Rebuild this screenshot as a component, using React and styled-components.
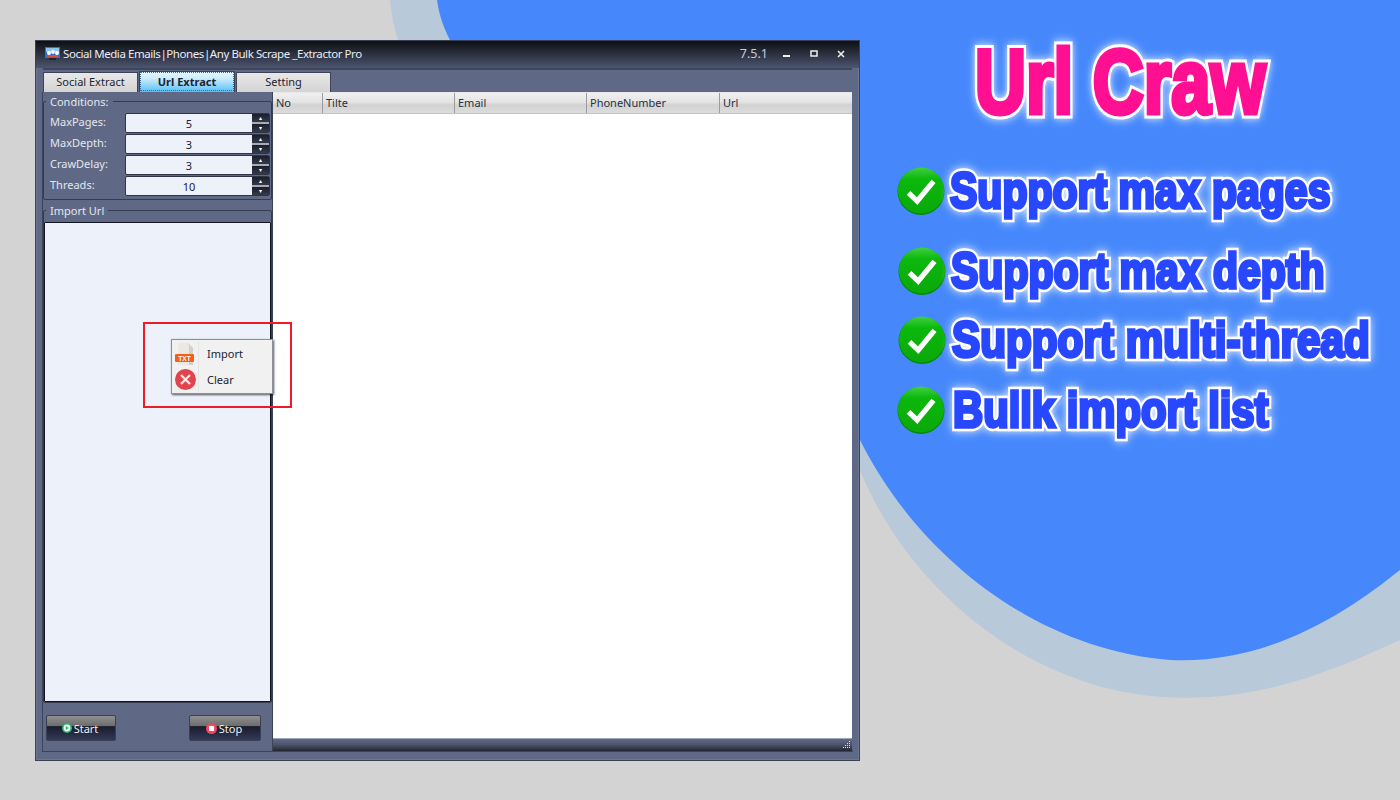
import React from 'react';
import styled, { createGlobalStyle } from 'styled-components';

const GlobalStyle = createGlobalStyle`
	html, body {
		margin: 0;
		padding: 0;
		background: #d3d3d3;
		overflow: hidden;
	}
	* {
		box-sizing: border-box;
	}
`;

const Page = styled.div`
	position: relative;
	width: 1400px;
	height: 800px;
	overflow: hidden;
	display: flex;
	align-items: flex-start;
	padding: 40px 0 0 35px;
	font-family: 'Noto Sans', 'Open Sans', sans-serif;
`;

const Backdrop = styled.svg`
	position: absolute;
	left: 0;
	top: 0;
`;

const AppWindow = styled.div`
	position: relative;
	width: 825px;
	height: 721px;
	flex: none;
	display: flex;
	flex-direction: column;
	background: #5f6986;
	border: 1px solid #3a4155;
	box-shadow: inset 0 0 0 1px #6d7792;
`;

const TitleBar = styled.div`
	height: 27px;
	flex: none;
	display: flex;
	align-items: center;
	padding: 0 5px 2px 9px;
	background: linear-gradient(#0d0f14 0%, #20242e 30%, #4c5570 100%);
	color: #e8ebf2;
	font-size: 11.5px;
	letter-spacing: -0.43px;
`;

const AppTitle = styled.span`
	margin-left: 3px;
	flex: 1;
	white-space: nowrap;
`;

const Version = styled.span`
	font-size: 12.5px;
	color: #c5cad6;
	margin-right: 5px;
	letter-spacing: 0;
`;

const WinButton = styled.span`
	width: 27px;
	display: flex;
	justify-content: center;
	align-items: center;
	color: #fff;
`;

const TabStrip = styled.div`
	flex: none;
	height: 24px;
	margin: 0 7px;
	padding-top: 2px;
	border-top: 2px solid #3f465c;
	display: flex;
	align-items: flex-end;
`;

const Tab = styled.div`
	width: ${p => p.$w}px;
	height: ${p => (p.$active ? 21 : 20)}px;
	padding-bottom: 2px;
	display: flex;
	align-items: center;
	justify-content: center;
	font-size: 11px;
	border: 1px solid #3c4357;
	border-bottom: none;
	margin-right: ${p => (p.$active ? 1 : 0)}px;
	margin-left: ${p => (p.$active ? 1 : 0)}px;
	color: #1d2330;
	font-weight: ${p => (p.$active ? 700 : 400)};
	background: ${p =>
		p.$active
			? 'linear-gradient(#e3f6fe 0%, #cfeefc 30%, #58c0f8 100%)'
			: 'linear-gradient(#e8e8e8, #d4d4d4)'};
	outline: ${p => (p.$active ? '1px dotted #3a6a96' : 'none')};
	outline-offset: -2px;
`;

const Body = styled.div`
	flex: 1;
	min-height: 0;
	display: flex;
	margin: 0 6px 8px 6px;
	border-bottom: 1px solid #3c4357;
`;

const Sidebar = styled.div`
	width: 231px;
	flex: none;
	display: flex;
	flex-direction: column;
	border-left: 1px solid #3c4357;
	border-right: 1px solid #3c4357;
`;

const Group = styled.fieldset`
	margin: 2px 0 0;
	padding: 0;
	min-width: 0;
	border: 1px solid #353c50;
	border-radius: 2px;
	${p => (p.$grow ? 'flex: 1; min-height: 0; display: flex; flex-direction: column;' : '')}
`;

const GroupLabel = styled.legend`
	margin-left: 2px;
	padding: 0 4px;
	font-size: 11px;
	line-height: 15px;
	color: #e3e6ee;
`;

const Fields = styled.div`
	display: flex;
	flex-direction: column;
	gap: 1px;
	padding: 4px 1px 3px 0;
`;

const FieldRow = styled.div`
	height: 20px;
	display: flex;
	align-items: center;
`;

const FieldName = styled.span`
	width: 81px;
	padding: 0 0 3px 6px;
	font-size: 11px;
	color: #e3e6ee;
`;

const NumberBox = styled.div`
	flex: 1;
	height: 20px;
	display: flex;
	align-items: stretch;
	background: #edf2fa;
	border: 1px solid #2f3546;
	border-radius: 2px;
`;

const NumberValue = styled.span`
	flex: 1;
	text-align: center;
	font-size: 11px;
	line-height: 20px;
	color: #1b2130;
`;

const Spinner = styled.div`
	width: 17px;
	display: flex;
	flex-direction: column;
	gap: 2px;
	background: #a6abb5;
`;

const SpinPart = styled.span`
	flex: 1;
	background: linear-gradient(#1a1e2c, #343a4a);
	color: #fff;
	font-size: 6px;
	line-height: 8px;
	text-align: center;
`;

const ImportGroup = styled.div`
	flex: 1;
	min-height: 0;
	display: flex;
	flex-direction: column;
	margin-top: 1px;
`;

const UrlArea = styled.div`
	flex: 1;
	min-height: 0;
	margin: 4px 0 0 0;
	background: #edf2fa;
	border: 1px solid #11141c;
	border-radius: 1px;
`;

const ButtonRow = styled.div`
	flex: none;
	height: 48px;
	display: flex;
	justify-content: space-between;
	align-items: flex-start;
	padding: 12px 11px 0 3px;
`;

const ActionButton = styled.div`
	width: ${p => p.$w}px;
	height: 26px;
	display: flex;
	align-items: center;
	justify-content: center;
	gap: 2px;
	padding-right: 2px;
	border: 1px solid #3a4054;
	border-radius: 2px;
	color: #eef0f5;
	font-size: 11px;
	background: linear-gradient(#8f8f8f 0%, #6c6c6c 42%, #191c2a 44%, #323a5a 100%);
`;

const Table = styled.div`
	flex: 1;
	min-width: 0;
	margin-right: 1px;
	display: flex;
	flex-direction: column;
	border-top: 1px solid #e8e8e8;
`;

const HeadRow = styled.div`
	flex: none;
	height: 21px;
	display: flex;
	background: linear-gradient(#f0f0f0 0%, #e4e4e4 45%, #d2d2d2 60%, #dcdcdc 100%);
	border-bottom: 1px solid #c4c4c4;
`;

const HeadCell = styled.div`
	width: ${p => p.$w}px;
	flex: ${p => (p.$last ? 1 : 'none')};
	padding-left: 3px;
	font-size: 11px;
	line-height: 19px;
	color: #2a3040;
	border-right: ${p => (p.$last ? 'none' : '1px solid #9c9c9c')};
`;

const Rows = styled.div`
	flex: 1;
	background: #fff;
`;

const ScrollBar = styled.div`
	flex: none;
	height: 13px;
	position: relative;
	border-top: 1px solid #a0a5b5;
	background: linear-gradient(#5f6986 0%, #4b5269 50%, #23262f 100%);
`;

const Grip = styled.svg`
	position: absolute;
	right: 1px;
	bottom: 1px;
`;

const ContextMenu = styled.div`
	position: absolute;
	left: 135px;
	top: 298px;
	width: 102px;
	height: 55px;
	padding: 1px 0;
	background: #f1f1f1;
	border: 1px solid #8a8f9a;
	box-shadow: 1px 1px 2px rgba(0, 0, 0, 0.65);
	display: flex;
	flex-direction: column;
`;

const MenuItem = styled.div`
	flex: 1;
	display: flex;
	align-items: center;
	font-size: 11px;
	color: #20242e;
`;

const MenuIcon = styled.div`
	width: 27px;
	margin-right: 8px;
	align-self: stretch;
	display: flex;
	justify-content: center;
	align-items: center;
	border-right: 1px solid #e4e4e4;
`;

const RedBox = styled.div`
	position: absolute;
	left: 107px;
	top: 281px;
	width: 149px;
	height: 86px;
	border: 2px solid #ee1c25;
	pointer-events: none;
`;

const Promo = styled.div`
	position: relative;
	margin-left: 37px;
	margin-top: -40px;
	width: 500px;
`;

const BigTitle = styled.div`
	position: relative;
	margin: 39px 0 0 78px;
	width: 400px;
	height: 87px;
	font-family: 'Liberation Sans', sans-serif;
	font-weight: 700;
	font-size: 90px;
	line-height: 87px;
	white-space: nowrap;
	color: #ff0f92;
	-webkit-text-stroke: 5px #ff0f92;
	transform: scaleX(0.785);
	transform-origin: left center;
	&::before {
		content: attr(data-text);
		position: absolute;
		left: 0;
		top: 0;
		z-index: -1;
		color: #fff;
		-webkit-text-stroke: 11px #fff;
		filter: drop-shadow(0 0 5px rgba(255, 255, 255, 0.85));
	}
`;

const Feature = styled.div`
	display: flex;
	align-items: center;
	height: 52px;
	margin-top: ${p => p.$top}px;
	margin-left: ${p => p.$left}px;
`;

const FeatureText = styled.span`
	position: relative;
	margin-left: ${p => p.$gap}px;
	font-family: 'Liberation Sans', sans-serif;
	font-weight: 700;
	font-size: 50px;
	line-height: 52px;
	white-space: nowrap;
	color: #2848ff;
	-webkit-text-stroke: 3.5px #2848ff;
	transform: scaleX(${p => p.$squeeze});
	transform-origin: left center;
	&::before {
		content: attr(data-text);
		position: absolute;
		left: 0;
		top: 0;
		z-index: -1;
		color: #fff;
		-webkit-text-stroke: 8.5px #fff;
		filter: drop-shadow(0 0 5px rgba(255, 255, 255, 0.85));
	}
`;

function CheckBadge() {
	return (
		<svg width="48" height="50" viewBox="0 0 50 52" style={{ flex: 'none' }}>
			<defs>
				<linearGradient id="greenBall" x1="0" y1="0" x2="0" y2="1">
					<stop offset="0" stopColor="#3fd03f" />
					<stop offset="0.25" stopColor="#0cb80c" />
					<stop offset="1" stopColor="#0aa80a" />
				</linearGradient>
			</defs>
			<circle cx="25" cy="26.5" r="24.5" fill="#078a07" />
			<circle cx="25" cy="25.5" r="24" fill="url(#greenBall)" />
			<path d="M12 28l9 8.5L38 16" fill="none" stroke="#fff" strokeWidth="5.5" />
		</svg>
	);
}

function AppIcon() {
	return (
		<svg width="15" height="14" viewBox="0 0 15 14">
			<rect x="0" y="0" width="15" height="11" fill="#2f6fd0" />
			<rect x="1" y="1" width="13" height="4" fill="#8fc4f0" />
			<circle cx="4" cy="6" r="2" fill="#fff" />
			<circle cx="8" cy="5" r="2" fill="#f4f4f4" />
			<circle cx="12" cy="6" r="2" fill="#fff" />
			<rect x="2" y="8" width="11" height="2" fill="#d8503c" />
			<rect x="4" y="11" width="7" height="2" fill="#20242e" />
		</svg>
	);
}

function TxtIcon() {
	return (
		<svg width="20" height="22" viewBox="0 0 20 22">
			<path d="M3 0h10l5 5v17H3z" fill="#ebe7e2" />
			<path d="M13 0l5 5v17h-4V3z" fill="#d4cfc9" />
			<rect x="0" y="11" width="19" height="8" rx="1" fill="#f4601c" />
			<text x="9.5" y="17.5" textAnchor="middle" fontSize="6.5" fontWeight="700" fill="#fff" fontFamily="Liberation Sans">
				TXT
			</text>
		</svg>
	);
}

function ClearIcon() {
	return (
		<svg width="21" height="21" viewBox="0 0 21 21">
			<circle cx="10.5" cy="10.5" r="10.5" fill="#e2444e" />
			<path d="M6 6l9 9M15 6l-9 9" stroke="#f6e8e8" strokeWidth="2.4" />
		</svg>
	);
}

function Stepper() {
	return (
		<Spinner>
			<SpinPart>▴</SpinPart>
			<SpinPart>▾</SpinPart>
		</Spinner>
	);
}

const fields = [
	['MaxPages:', 5],
	['MaxDepth:', 3],
	['CrawDelay:', 3],
	['Threads:', 10],
];

const columns = [
	['No', 50],
	['Tilte', 132],
	['Email', 132],
	['PhoneNumber', 133],
];

const features = [
	{ label: 'Support max pages', top: 39, left: 0, gap: 5, squeeze: 0.82 },
	{ label: 'Support max depth', top: 28, left: 1, gap: 5, squeeze: 0.82 },
	{ label: 'Support multi-thread', top: 17, left: 1, gap: 6, squeeze: 0.845 },
	{ label: 'Bullk import list', top: 18, left: 0, gap: 8, squeeze: 0.835 },
];

function App() {
	return (
		<>
			<GlobalStyle />
			<Page>
				<Backdrop width="1400" height="800" viewBox="0 0 1400 800">
					<path
						d="M390 0C395 60 430 120 520 180C640 260 800 330 860 470C900 570 1000 670 1130 693C1240 712 1330 672 1400 640V0Z"
						fill="#b8c9da"
					/>
					<path
						d="M437 0C445 60 500 110 600 170C720 240 820 340 860 440C920 560 1040 650 1170 660C1270 665 1350 610 1400 570V0Z"
						fill="#4688fc"
					/>
				</Backdrop>
				<AppWindow>
					<TitleBar>
						<AppIcon />
						<AppTitle>Social Media Emails|Phones|Any Bulk Scrape _Extractor Pro</AppTitle>
						<Version>7.5.1</Version>
						<WinButton>
							<svg width="8" height="8" viewBox="0 0 8 8"><rect x="0" y="5" width="7" height="2" fill="#eee" /></svg>
						</WinButton>
						<WinButton>
							<svg width="8" height="8" viewBox="0 0 8 8"><rect x="1" y="1" width="6" height="5" fill="none" stroke="#eee" strokeWidth="1.5" /></svg>
						</WinButton>
						<WinButton>
							<svg width="8" height="8" viewBox="0 0 8 8"><path d="M1 1l6 6M7 1l-6 6" stroke="#eee" strokeWidth="1.6" /></svg>
						</WinButton>
					</TitleBar>
					<TabStrip>
						<Tab $w={95}>Social Extract</Tab>
						<Tab $w={96} $active>Url Extract</Tab>
						<Tab $w={95}>Setting</Tab>
					</TabStrip>
					<Body>
						<Sidebar>
							<Group>
								<GroupLabel>Conditions:</GroupLabel>
								<Fields>
									{fields.map(([name, value]) => (
										<FieldRow key={name}>
											<FieldName>{name}</FieldName>
											<NumberBox>
												<NumberValue>{value}</NumberValue>
												<Stepper />
											</NumberBox>
										</FieldRow>
									))}
								</Fields>
							</Group>
							<ImportGroup>
								<Group $grow>
									<GroupLabel>Import Url</GroupLabel>
									<UrlArea />
								</Group>
							</ImportGroup>
							<ButtonRow>
								<ActionButton $w={70}>
									<svg width="10" height="10" viewBox="0 0 10 10">
										<circle cx="5" cy="5" r="5" fill="#2fb673" />
										<circle cx="5" cy="5" r="3.4" fill="#e8f6ee" />
										<path d="M3.8 3v4l3-2z" fill="#2fb673" />
									</svg>
									Start
								</ActionButton>
								<ActionButton $w={72}>
									<svg width="11" height="11" viewBox="0 0 11 11">
										<circle cx="5.5" cy="5.5" r="5.5" fill="#ec4a5e" />
										<rect x="3" y="3" width="5" height="5" fill="#fff" />
									</svg>
									Stop
								</ActionButton>
							</ButtonRow>
						</Sidebar>
						<Table>
							<HeadRow>
								{columns.map(([label, w]) => (
									<HeadCell key={label} $w={w}>{label}</HeadCell>
								))}
								<HeadCell $last>Url</HeadCell>
							</HeadRow>
							<Rows />
							<ScrollBar>
								<Grip width="10" height="10" viewBox="0 0 10 10">
									<path d="M8 1h1v1H8zM8 3h1v1H8zM6 3h1v1H6zM8 5h1v1H8zM6 5h1v1H6zM4 5h1v1H4zM8 7h1v1H8zM6 7h1v1H6zM4 7h1v1H4zM2 7h1v1H2z" fill="#d8dbe4" />
								</Grip>
							</ScrollBar>
						</Table>
					</Body>
					<RedBox />
					<ContextMenu>
						<MenuItem>
							<MenuIcon><TxtIcon /></MenuIcon>
							Import
						</MenuItem>
						<MenuItem>
							<MenuIcon><ClearIcon /></MenuIcon>
							Clear
						</MenuItem>
					</ContextMenu>
				</AppWindow>
				<Promo>
					<BigTitle data-text="Url Craw">Url Craw</BigTitle>
					{features.map(({ label, top, left, gap, squeeze }) => (
						<Feature key={label} $top={top} $left={left}>
							<CheckBadge />
							<FeatureText data-text={label} $gap={gap} $squeeze={squeeze}>{label}</FeatureText>
						</Feature>
					))}
				</Promo>
			</Page>
		</>
	);
}

export default App;
